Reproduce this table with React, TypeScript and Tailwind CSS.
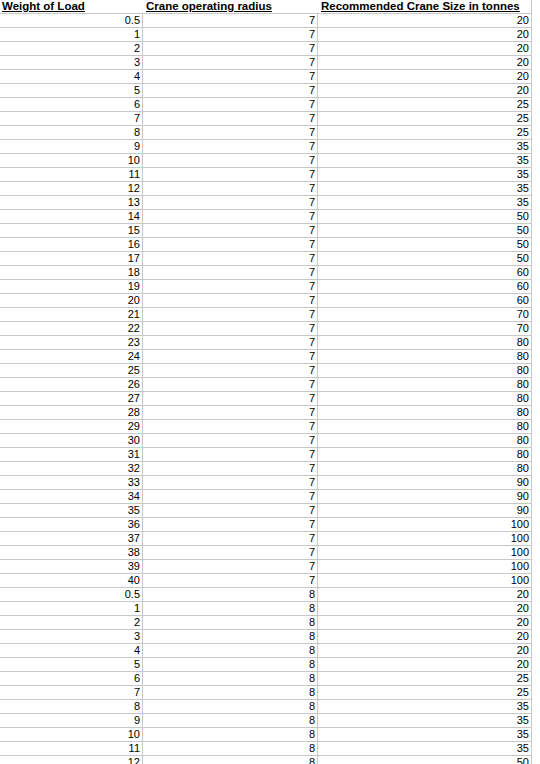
const block1: [number, number][] = [
  [0.5, 20], [1, 20], [2, 20], [3, 20], [4, 20], [5, 20],
  [6, 25], [7, 25], [8, 25],
  [9, 35], [10, 35], [11, 35], [12, 35], [13, 35],
  [14, 50], [15, 50], [16, 50], [17, 50],
  [18, 60], [19, 60], [20, 60],
  [21, 70], [22, 70],
  [23, 80], [24, 80], [25, 80], [26, 80], [27, 80], [28, 80], [29, 80], [30, 80], [31, 80], [32, 80],
  [33, 90], [34, 90], [35, 90],
  [36, 100], [37, 100], [38, 100], [39, 100], [40, 100],
]

const block2: [number, number][] = [
  [0.5, 20], [1, 20], [2, 20], [3, 20], [4, 20], [5, 20],
  [6, 25], [7, 25],
  [8, 35], [9, 35], [10, 35], [11, 35],
  [12, 50],
]

const rows = [
  ...block1.map(([w, s]) => ({ w, r: 7, s })),
  ...block2.map(([w, s]) => ({ w, r: 8, s })),
]

const cell = 'h-[14px] border-b border-r border-[#c8c8c8] pr-[2px] text-right leading-[13px]'

export default function App() {
  return (
    <div className="w-[540px] h-[764px] overflow-hidden bg-white text-black" style={{ fontFamily: '"Liberation Sans", Arial, sans-serif' }}>
      <div className="grid grid-cols-[143px_175px_214px] text-[11px]">
        {/* header row */}
        <div className="h-[14px] border-b border-[#c8c8c8] pl-[2px] font-bold underline text-[11.5px] leading-[12px] whitespace-nowrap">Weight of Load</div>
        <div className="h-[14px] border-b border-[#c8c8c8] pl-[3px] font-bold underline text-[11.5px] leading-[12px] whitespace-nowrap">Crane operating radius</div>
        <div className="h-[14px] border-b border-r border-[#c8c8c8] pl-[3px] font-bold underline text-[11.5px] leading-[12px] whitespace-nowrap">Recommended Crane Size in tonnes</div>

        {rows.map((row, i) => (
          <div key={i} className="contents">
            <div className={cell}>{row.w}</div>
            <div className={cell}>{row.r}</div>
            <div className={cell}>{row.s}</div>
          </div>
        ))}
      </div>
    </div>
  )
}
